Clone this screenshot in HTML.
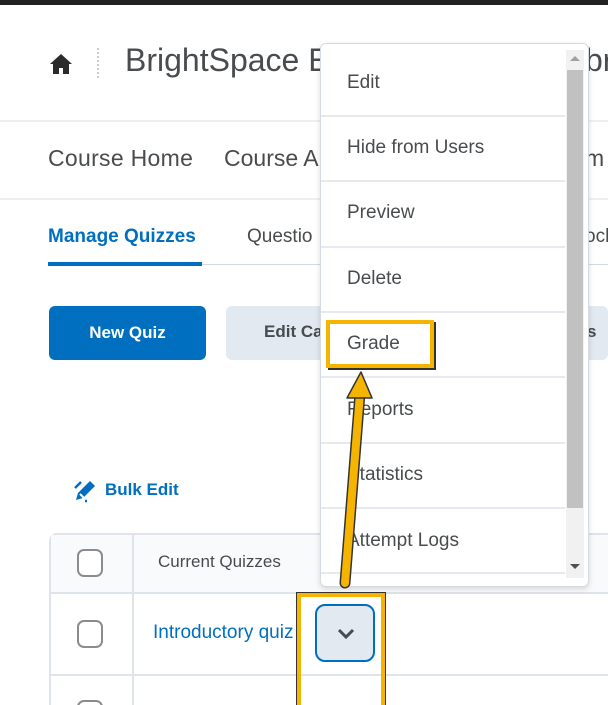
<!DOCTYPE html>
<html style="width:608px;height:705px;overflow:hidden"><head><style>
body{margin:0;width:608px;height:705px;overflow:hidden;background:#fff;font-family:"Liberation Sans",sans-serif;position:relative}
.a{position:absolute}
.t{color:#494c4e}
.mi{position:absolute;left:347px;font-size:19px;color:#494c4e}
.sep{position:absolute;left:321px;width:244px;height:2px;background:#e6eaf0}
.cb{position:absolute;width:26px;height:28px;border:2px solid #8a8d90;border-radius:7px;box-sizing:border-box;background:#fff}
</style></head><body>
<div class="a" style="left:0;top:0;width:608px;height:5px;background:#222"></div>
<svg class="a" style="left:49px;top:53px" width="24" height="22" viewBox="0 0 24 22"><path d="M12 1L1 11h3v10h6v-6h4v6h6V11h3z" fill="#2b2b2b"/></svg>
<div class="a" style="left:97px;top:48px;width:2px;height:30px;border-left:2px dotted #c9cfd6"></div>
<div class="a t" style="left:125px;top:42px;font-size:32px;color:#494c4e">BrightSpace E</div>
<div class="a t" style="left:585px;top:42px;font-size:32px">br</div>
<div class="a" style="left:0;top:120px;width:608px;height:2px;background:#eef0f3"></div>
<div class="a t" style="left:48px;top:145px;font-size:23px;letter-spacing:.3px">Course Home</div>
<div class="a t" style="left:224px;top:145px;font-size:23px">Course A</div>
<div class="a t" style="left:585px;top:145px;font-size:23px">m</div>
<div class="a" style="left:0;top:198px;width:608px;height:2px;background:#eef0f3"></div>
<div class="a" style="left:48px;top:226px;font-size:19px;color:#006fbf;font-weight:bold">Manage Quizzes</div>
<div class="a t" style="left:247px;top:226px;font-size:19px">Questio</div>
<div class="a t" style="left:585px;top:226px;font-size:19px">ocl</div>
<div class="a" style="left:48px;top:264px;width:560px;height:1px;background:#d3d9e3"></div>
<div class="a" style="left:48px;top:262px;width:154px;height:4px;background:#006fbf"></div>
<div class="a" style="left:49px;top:306px;width:157px;height:54px;background:#006fbf;border-radius:6px;color:#fff;font-weight:bold;font-size:17px;line-height:54px;text-align:center">New Quiz</div>
<div class="a" style="left:226px;top:306px;width:382px;height:54px;background:#e3e9f1;border-radius:6px"></div>
<div class="a" style="left:264px;top:322px;font-weight:bold;font-size:17px;color:#494c4e">Edit Ca</div>
<div class="a" style="left:587px;top:322px;font-weight:bold;font-size:17px;color:#494c4e">s</div>
<svg class="a" style="left:73px;top:479px" width="26" height="24" viewBox="0 0 26 24"><path d="M3 21l2-7L17 2l5 5L10 19z" fill="#006fbf"/><path d="M7 15l4 4" stroke="#fff" stroke-width="2"/><path d="M2 9l6-6" stroke="#006fbf" stroke-width="2.5"/><path d="M12 22h2" stroke="#006fbf" stroke-width="2.5"/></svg>
<div class="a" style="left:105px;top:480px;font-size:17px;color:#006fbf;font-weight:bold">Bulk Edit</div>
<div class="a" style="left:49px;top:533px;width:570px;height:180px;border:2px solid #dfe3ea;border-radius:8px;box-sizing:border-box"></div>
<div class="a" style="left:51px;top:535px;width:560px;height:58px;background:#f9fafb"></div>
<div class="a" style="left:49px;top:592px;width:559px;height:2px;background:#dfe3ea"></div>
<div class="a" style="left:49px;top:674px;width:559px;height:2px;background:#dfe3ea"></div>
<div class="a" style="left:132px;top:533px;width:2px;height:172px;background:#dfe3ea"></div>
<div class="cb" style="left:77px;top:549px"></div>
<div class="cb" style="left:77px;top:620px"></div>
<div class="cb" style="left:77px;top:700px"></div>
<div class="a" style="left:158px;top:552px;font-size:17px;color:#494c4e">Current Quizzes</div>
<div class="a" style="left:153px;top:622px;font-size:19px;color:#006fbf">Introductory quiz</div>
<div class="a" style="left:315px;top:604px;width:60px;height:58px;background:#e3e9f1;border:2px solid #006fbf;border-radius:10px;box-sizing:border-box"></div>
<svg class="a" style="left:336px;top:627px" width="20" height="14"><path d="M3 3l7 7 7-7" stroke="#494c4e" stroke-width="3" fill="none"/></svg>
<div class="a" style="left:297px;top:593px;width:88px;height:120px;border:4px solid #f5b400;box-sizing:border-box;outline:1px solid #333"></div>
<div class="a" style="left:320px;top:43px;width:267px;height:542px;background:#fff;border:1px solid #d6dbe2;border-radius:6px;box-shadow:0 2px 6px rgba(0,0,0,.15)"></div>
<div class="a" style="left:566px;top:50px;width:18px;height:528px;background:#f1f1f1"></div>
<div class="a" style="left:567px;top:70px;width:16px;height:438px;background:#c1c1c1"></div>
<div class="a" style="left:570px;top:56px;width:0;height:0;border:5px solid transparent;border-bottom:5px solid #a0a0a0;border-top:0"></div>
<div class="a" style="left:570px;top:564px;width:0;height:0;border:5px solid transparent;border-top:5px solid #505050;border-bottom:0"></div>
<div class="mi" style="top:72px">Edit</div>
<div class="sep" style="top:115px"></div>
<div class="mi" style="top:137px">Hide from Users</div>
<div class="sep" style="top:180px"></div>
<div class="mi" style="top:202px">Preview</div>
<div class="sep" style="top:246px"></div>
<div class="mi" style="top:268px">Delete</div>
<div class="sep" style="top:311px"></div>
<div class="mi" style="top:333px">Grade</div>
<div class="sep" style="top:376px"></div>
<div class="mi" style="top:399px">Reports</div>
<div class="sep" style="top:442px"></div>
<div class="mi" style="top:464px">Statistics</div>
<div class="sep" style="top:507px"></div>
<div class="mi" style="top:530px">Attempt Logs</div>
<div class="sep" style="top:572px"></div>
<div class="a" style="left:326px;top:320px;width:108px;height:48px;border:4px solid #f5b400;box-sizing:border-box;box-shadow:2px 2px 0 #333"></div>
<svg class="a" style="left:325px;top:368px" width="50" height="225"><path d="M20 215L35 25" stroke="#333" stroke-width="11" stroke-linecap="round"/><path d="M20 215L35 25" stroke="#f5b400" stroke-width="8" stroke-linecap="round"/><path d="M22 30L36 4 47 30z" fill="#f5b400" stroke="#333" stroke-width="1.5" stroke-linejoin="round"/></svg>
</body></html>
